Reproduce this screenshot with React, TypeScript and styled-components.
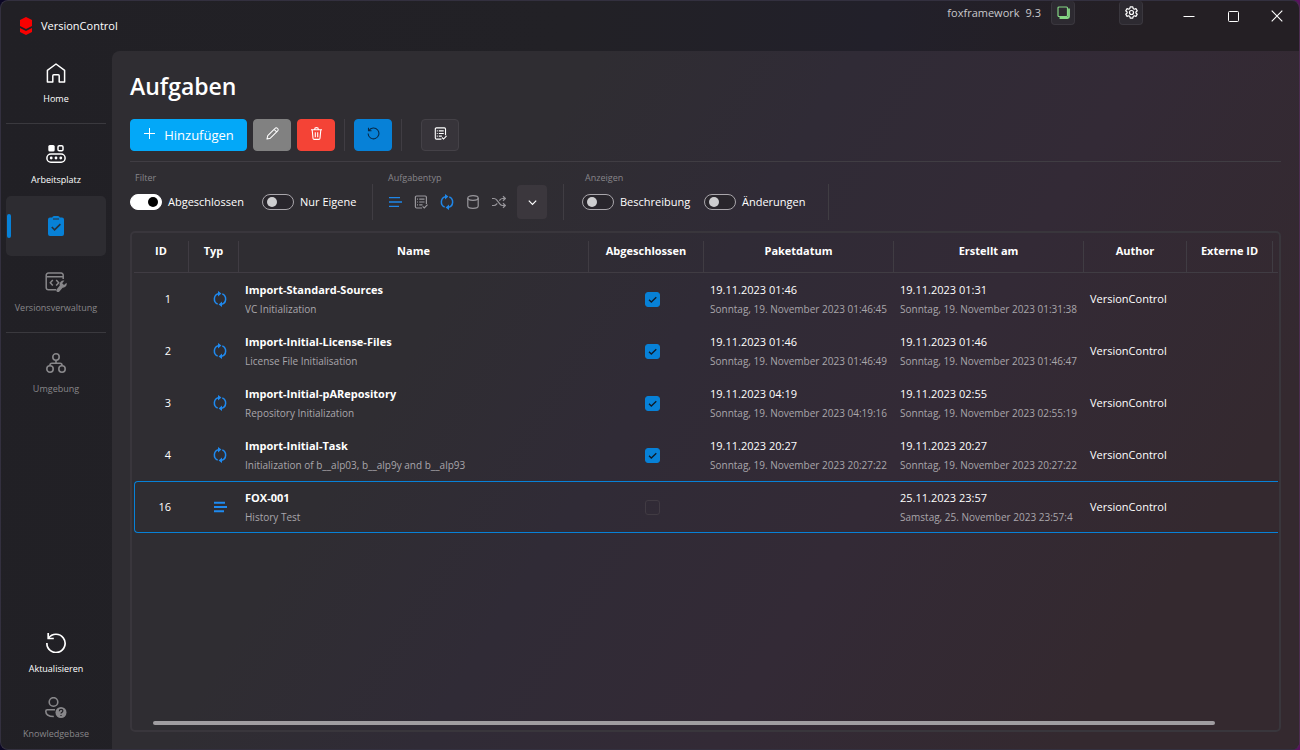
import React from "react";
import styled, { createGlobalStyle, css } from "styled-components";

const GlobalStyle = createGlobalStyle`
  *, *::before, *::after { box-sizing: border-box; }
  html, body, #root { height: 100%; }
  body {
    margin: 0;
    background: linear-gradient(90deg, #0b0724 0%, #2b0a35 60%, #5a1260 100%);
    color: #fff;
    font-family: "Open Sans", "Noto Sans", sans-serif;
    font-size: 11px;
    line-height: 16px;
  }
  button, input { font: inherit; color: inherit; margin: 0; }
`;

const Window = styled.div`
  height: 100%;
  min-height: 640px;
  display: grid;
  grid-template: 50px minmax(0, 1fr) / 111px minmax(0, 1fr);
  border: 1px solid #33303f;
  border-right-color: #4d2c50;
  border-radius: 8px;
  overflow: hidden;
  background: linear-gradient(100deg, #212025 0%, #222126 40%, #22202a 62%, #241f24 80%);
`;

const TitleBar = styled.header`
  grid-column: 1 / -1;
  display: flex;
  align-items: flex-start;
  justify-content: space-between;
`;

const Brand = styled.div`
  display: flex;
  align-items: center;
  gap: 8px;
  padding: 14px 0 0 18px;
  line-height: 22px;
`;

const TitleTools = styled.div`
  display: flex;
  align-items: flex-start;
`;

const Project = styled.span`
  display: flex;
  gap: 6px;
  padding-right: 10px;
  line-height: 24px;
  color: #c9c8cb;
`;

const TitleButton = styled.button<{ $gap: number }>`
  width: 24px;
  height: 24px;
  margin-right: ${(p) => p.$gap}px;
  padding: 0;
  display: grid;
  place-items: center;
  background: #2d2a31;
  border: 1px solid #3a373e;
  border-top: 0;
  border-radius: 4px;
`;

const CaptionButton = styled.button`
  width: 44px;
  height: 29px;
  padding: 0;
  display: grid;
  place-items: center;
  background: none;
  border: 0;
`;

const Sidebar = styled.nav`
  display: flex;
  flex-direction: column;
  gap: 4px;
  padding: 0 6px 4px 5px;
`;

const NavItem = styled.button<{ $tone?: "bright" | "dim"; $active?: boolean }>`
  height: 60px;
  padding: ${(p) => (p.$active ? "0" : "12px 0 0")};
  display: flex;
  flex-direction: column;
  align-items: center;
  justify-content: ${(p) => (p.$active ? "center" : "flex-start")};
  gap: 9px;
  border: 0;
  border-radius: 5px;
  background: none;
  color: ${(p) => (p.$tone === "dim" ? "#88878a" : "#fff")};
  font-size: 9px;
  line-height: 14px;
  white-space: nowrap;
  position: relative;
  ${(p) =>
    p.$active &&
    css`
      background: #2d2c31;
      color: #0781d7;
      &::before {
        content: "";
        position: absolute;
        left: 1px;
        top: 18px;
        width: 4px;
        height: 24px;
        border-radius: 2px;
        background: #0781d7;
      }
    `}
`;

const NavRule = styled.hr`
  width: 100%;
  height: 1px;
  margin: 8px 0 4px;
  border: 0;
  background: #3a393e;
`;

const Spacer = styled.div`
  flex: 1;
`;

const Main = styled.main`
  display: flex;
  flex-direction: column;
  padding: 19px 18px 17px 18px;
  border-top-left-radius: 8px;
  background: linear-gradient(122deg, #2f2d32 0%, #2f2d32 30%, #302b36 46%, #332a36 64%, #34292f 86%);
  min-width: 0;
`;

const PageTitle = styled.h1`
  margin: 0;
  font-size: 23px;
  line-height: 32px;
  font-weight: 600;
`;

const Toolbar = styled.div`
  display: flex;
  align-items: center;
  gap: 6px;
  margin-top: 17px;
  padding-bottom: 10px;
  border-bottom: 1px solid #403d43;
`;

const ToolButton = styled.button<{ $bg: string; $line?: string }>`
  width: 38px;
  height: 32px;
  padding: 0;
  display: grid;
  place-items: center;
  border: 1px solid ${(p) => p.$line || p.$bg};
  border-radius: 4px;
  background: ${(p) => p.$bg};
  svg { margin-bottom: 3px; }
`;

const AddButton = styled(ToolButton)`
  width: 117px;
  display: flex;
  align-items: center;
  justify-content: center;
  gap: 8px;
  font-size: 13px;
`;

const ToolRule = styled.span<{ $after: number }>`
  width: 1px;
  height: 32px;
  margin: 0 ${(p) => p.$after}px 0 3px;
  background: #403d43;
`;

const FilterBar = styled.div`
  display: flex;
  align-items: flex-end;
  height: 58px;
  margin-bottom: 11px;
`;

const Group = styled.fieldset<{ $width: number; $inset: number }>`
  width: ${(p) => p.$width}px;
  height: 51px;
  margin: 0;
  padding: 0 0 0 ${(p) => p.$inset}px;
  border: 0;
  border-right: 1px solid transparent;
  border-image: linear-gradient(transparent 15px, #403d43 15px) 1;
  border-image-width: 0 1px 0 0;
`;

const GroupName = styled.legend<{ $indent: number }>`
  float: left;
  width: 100%;
  padding: 2px 0 0 ${(p) => p.$indent}px;
  font-size: 9px;
  line-height: 14px;
  color: #87858a;
`;

const Controls = styled.div<{ $gap: number }>`
  clear: both;
  height: 34px;
  display: flex;
  align-items: center;
  gap: ${(p) => p.$gap}px;
`;

const Toggle = styled.label<{ $width: number }>`
  width: ${(p) => p.$width}px;
  display: flex;
  align-items: center;
  gap: 6px;
  white-space: nowrap;
`;

const Switch = styled.input`
  appearance: none;
  width: 32px;
  height: 16px;
  flex: none;
  padding: 2px;
  display: flex;
  align-items: center;
  border: 1px solid #a9a6ab;
  border-radius: 8px;
  background: #29262c;
  &::before {
    content: "";
    width: 10px;
    height: 10px;
    margin-left: 2px;
    border-radius: 50%;
    background: #ceced0;
  }
  &:checked { background: #fff; border-color: #fff; }
  &:checked::before { margin-left: 15px; background: #000; }
`;

const TypeButton = styled.button<{ $on?: boolean }>`
  width: 14px;
  height: 16px;
  padding: 0;
  display: grid;
  place-items: center;
  border: 0;
  background: none;
  color: ${(p) => (p.$on ? "#1f86e8" : "#98969b")};
`;

const MoreButton = styled.button`
  width: 30px;
  height: 34px;
  margin-left: -1px;
  padding: 0;
  display: grid;
  place-items: center;
  border: 0;
  border-radius: 4px;
  background: #3b373d;
`;

const Grid = styled.section`
  flex: 1;
  min-height: 0;
  display: flex;
  flex-direction: column;
  justify-content: space-between;
  padding: 0 1px 5px 2px;
  border: 2px solid #39363c;
  border-radius: 5px;
`;

const Table = styled.table`
  width: 100%;
  table-layout: fixed;
  border-collapse: separate;
  border-spacing: 0;
`;

const Th = styled.th<{ $last?: boolean }>`
  height: 40px;
  padding: 0;
  border-bottom: 1px solid #403c43;
  line-height: 16px;
  vertical-align: bottom;
  span {
    display: block;
    height: 31px;
    padding-top: 2px;
    white-space: nowrap;
    border-right: ${(p) => (p.$last ? "0" : "1px solid #403c43")};
  }
`;

const Td = styled.td`
  height: 52px;
  padding: 0 3px 0 6px;
  border: 0 solid #0781d7;
`;

const TextCell = styled(Td)`
  padding-top: 2px;
  overflow: hidden;
`;

const Row = styled.tr<{ $selected: boolean }>`
  ${(p) =>
    p.$selected &&
    css`
      ${Td} { border-width: 1px 0; }
      ${Td}:first-child { border-left-width: 1px; border-radius: 4px 0 0 4px; }
    `}
`;

const IdCell = styled(Td)`
  text-align: right;
  padding-right: 18px;
`;

const IconCell = styled(Td)`
  padding: 0 0 0 24px;
  color: #1f8af0;
  svg { display: block; }
`;

const CheckCell = styled(Td)`
  padding: 0 0 0 56px;
`;

const Check = styled.input`
  appearance: none;
  display: block;
  width: 15px;
  height: 15px;
  border: 1px solid #413b43;
  border-radius: 3px;
  &:checked {
    border-color: #0781d7;
    background: #0781d7
      url("data:image/svg+xml,%3Csvg xmlns='http://www.w3.org/2000/svg' width='13' height='13' fill='none' stroke='%23101a26' stroke-width='1.3'%3E%3Cpath d='M3 6.7l2.3 2.3L10.3 4.2'/%3E%3C/svg%3E")
      center no-repeat;
  }
`;

const Primary = styled.div<{ $bold?: boolean }>`
  line-height: 18px;
  font-weight: ${(p) => (p.$bold ? 700 : 400)};
  white-space: nowrap;
`;

const Secondary = styled.div`
  line-height: 20px;
  font-size: 10px;
  color: #a9a6ab;
  white-space: nowrap;
  overflow: hidden;
`;

const ScrollTrack = styled.div`
  padding: 0 63px 0 19px;
`;

const ScrollThumb = styled.div`
  height: 4px;
  border-radius: 2px;
  background: #a09da1;
`;

type IconProps = { size?: number; w?: number; children: React.ReactNode; box?: number };
const Icon = ({ size = 20, w = 1.5, box = 20, children }: IconProps) => (
  <svg width={size} height={size} viewBox={`0 0 ${box} ${box}`} fill="none" stroke="currentColor" strokeWidth={w} aria-hidden="true">
    {children}
  </svg>
);

const Logo = () => (
  <svg width="14" height="18" viewBox="0 0 14 18" aria-hidden="true">
    <path fill="#f80000" d="M7 0 13 3V9L7 12 1 9V3Z" />
    <path fill="#f80000" d="M1 11 7 14 13 11V15L7 18 1 15Z" />
  </svg>
);

const HomeIcon = () => (
  <Icon w={1.5}>
    <path strokeLinejoin="round" d="M1.400 19V7.400L10 1l8.600 6.400V19h-5.400v-6.200q0-1-1-1H7.800q-1 0-1 1V19Z" />
  </Icon>
);
const WorkspaceIcon = () => (
  <Icon>
    <rect x="2.300" y="1" width="6.400" height="6.400" rx="1.500" fill="currentColor" stroke="none" />
    <rect x="12" y="1.800" width="5" height="5" rx="1.300" />
    <rect x="0.900" y="10" width="18.200" height="8.200" rx="4" />
    <g fill="currentColor" stroke="none">
      <circle cx="5.200" cy="14" r="1.400" /><circle cx="10" cy="14" r="1.400" /><circle cx="14.800" cy="14" r="1.400" />
    </g>
  </Icon>
);
const TasksIcon = () => (
  <Icon>
    <path fill="currentColor" stroke="none" d="M4 1.600h2.200A2 2 0 0 1 8 0h4a2 2 0 0 1 1.800 1.600H16a2 2 0 0 1 2 2V18a2 2 0 0 1-2 2H4a2 2 0 0 1-2-2V3.600a2 2 0 0 1 2-2Z" />
    <path stroke="#2b2d34" strokeWidth="1" d="M7 3h6" />
    <path stroke="#25303c" strokeWidth="1.600" d="m5.800 11 2.800 2.900 5.800-5.800" />
  </Icon>
);
const VersionsIcon = () => (
  <svg width="22" height="20" viewBox="0 0 22 20" fill="none" stroke="currentColor" strokeWidth="1.500" aria-hidden="true">
    <path d="M18.200 7V3.500A2.300 2.300 0 0 0 16 1H3.500A2.300 2.300 0 0 0 1.200 3.500v12a2.300 2.300 0 0 0 2.300 2.300H11M1.200 4.700h17" />
    <path d="M7.800 8 5.300 10.800l2.500 2.800M11.200 8l2.500 2.800-2.500 2.800" />
    <path fill="currentColor" stroke="none" d="M19.400 8.600a3.800 3.800 0 0 0-4.600 4.800l-3 3.900a1.700 1.700 0 0 0 2.600 2.200l3.200-3.800a3.800 3.800 0 0 0 3.900-5l-2.500 2.200-1.800-1.600Z" />
  </svg>
);
const EnvironmentIcon = () => (
  <Icon w={1.600}>
    <circle cx="10" cy="4" r="3.200" /><circle cx="4" cy="16" r="3.200" /><circle cx="16" cy="16" r="3.200" />
    <path d="M10 7.200v3M4 12.800v-.8q0-1.800 2-1.800h8q2 0 2 1.800v.8" />
  </Icon>
);
const RefreshIcon = () => (
  <Icon w={1.700}>
    <path d="M2.500 5.200A9.100 9.100 0 1 1 .9 10" />
    <path d="M2.200 0v5.500h5.600" />
  </Icon>
);
const HelpUserIcon = () => (
  <svg width="22" height="21" viewBox="0 0 22 21" fill="none" stroke="currentColor" strokeWidth="1.600" aria-hidden="true">
    <circle cx="8.500" cy="5" r="4.300" />
    <path d="M10 12.800H2.300a1.500 1.500 0 0 0-1.500 1.500q0 5.200 8 5.200" />
    <circle cx="16" cy="15.500" r="5.500" fill="currentColor" stroke="none" />
    <path stroke="#222126" strokeWidth="1.200" d="M14.300 14.200q0-1.800 1.800-1.800t1.700 1.600q0 .8-1 1.400-.8.400-.8 1.200M16 17.900v1.200" />
  </svg>
);
const PencilIcon = () => (
  <Icon size={13} box={14} w={1.100}>
    <path strokeLinejoin="round" d="m1 13 .9-3.700L9.800 1.400a1.600 1.600 0 0 1 2.400 0l.4.400a1.600 1.600 0 0 1 0 2.400L4.700 12.100ZM8.700 2.500l2.800 2.800" />
  </Icon>
);
const TrashIcon = () => (
  <Icon size={13} box={13} w={1.100}>
    <path strokeLinejoin="round" d="M1 2.800h11M4.600 2.500q0-1.900 1.900-1.900t1.900 1.900M2.200 3l.8 8.300q.1 1.100 1.200 1.100h4.600q1.100 0 1.200-1.100L10.800 3M5.300 5.200v5M7.700 5.200v5" />
  </Icon>
);
const ReloadIcon = () => (
  <Icon size={13} box={13} w={1.100}>
    <path stroke="#082a48" d="M1.900 3.600A5.400 5.400 0 1 1 1.100 6.500M1.500 .8v3h3" />
  </Icon>
);
const ListCheckIcon = ({ size = 13 }: { size?: number }) => (
  <Icon size={size} box={14} w={1.200}>
    <path d="M12.400 9V2.200Q12.400 1 11.200 1H2.600Q1.400 1 1.400 2.200v9.600Q1.400 13 2.600 13H8M5.200 4.200h5.300M5.200 7h5.300M5.200 9.800h3.300M3 4.200h1M3 7h1M3 9.800h1M8.600 11.300l1.700 1.700 3.200-3.400" />
  </Icon>
);
const LinesIcon = ({ w = 1.300 }: { w?: number }) => (
  <Icon size={14} box={14} w={w}><path d="M1 2.700h11M1 7h13M1 11.300h10" /></Icon>
);
const SyncIcon = () => (
  <svg width="14" height="16" viewBox="0 0 14 16" fill="none" stroke="currentColor" strokeWidth="1.500" aria-hidden="true">
    <path d="M5.400 2.600A5.600 5.600 0 0 0 4.700 13.100M8.600 13.400A5.600 5.600 0 0 0 9.300 2.900" />
    <path fill="currentColor" stroke="none" d="M5 0 8.400 2.600 5 5.400ZM9 10.600 5.600 13.400 9 16Z" />
  </svg>
);
const DatabaseIcon = () => (
  <Icon size={14} box={14} w={1.200}>
    <ellipse cx="7" cy="3" rx="5.200" ry="2.300" />
    <path d="M1.800 3v8q0 2.300 5.200 2.300t5.200-2.300V3" />
  </Icon>
);
const ShuffleIcon = () => (
  <Icon size={14} box={14} w={1.200}>
    <path d="M0 3.500h2q1.500 0 2.600 1.300l3.400 4.400Q9 10.500 10.500 10.500H13M0 10.500h2q1.500 0 2.600-1.300l.6-.8M7.400 5.600l.6-.8Q9 3.500 10.500 3.500H13M11 1.300l2.300 2.200L11 5.700M11 8.300l2.300 2.200L11 12.700" />
  </Icon>
);

const nav = (label: string, icon: React.ReactNode, tone: "bright" | "dim" = "bright") => (
  <NavItem type="button" $tone={tone}>
    {icon}
    {label}
  </NavItem>
);

const columns: { label: string; width?: number }[] = [
  { label: "ID", width: 55 },
  { label: "Typ", width: 50 },
  { label: "Name" },
  { label: "Abgeschlossen", width: 115 },
  { label: "Paketdatum", width: 190 },
  { label: "Erstellt am", width: 190 },
  { label: "Author", width: 103 },
  { label: "Externe ID", width: 86 },
  { label: "", width: 5 },
];

type Task = {
  id: number;
  name: string;
  text: string;
  done: boolean;
  pack?: [string, string];
  created: [string, string];
};

const tasks: Task[] = [
  { id: 1, name: "Import-Standard-Sources", text: "VC Initialization", done: true, pack: ["19.11.2023 01:46", "Sonntag, 19. November 2023 01:46:45"], created: ["19.11.2023 01:31", "Sonntag, 19. November 2023 01:31:38"] },
  { id: 2, name: "Import-Initial-License-Files", text: "License File Initialisation", done: true, pack: ["19.11.2023 01:46", "Sonntag, 19. November 2023 01:46:49"], created: ["19.11.2023 01:46", "Sonntag, 19. November 2023 01:46:47"] },
  { id: 3, name: "Import-Initial-pARepository", text: "Repository Initialization", done: true, pack: ["19.11.2023 04:19", "Sonntag, 19. November 2023 04:19:16"], created: ["19.11.2023 02:55", "Sonntag, 19. November 2023 02:55:19"] },
  { id: 4, name: "Import-Initial-Task", text: "Initialization of b__alp03, b__alp9y and b__alp93", done: true, pack: ["19.11.2023 20:27", "Sonntag, 19. November 2023 20:27:22"], created: ["19.11.2023 20:27", "Sonntag, 19. November 2023 20:27:22"] },
  { id: 16, name: "FOX-001", text: "History Test", done: false, created: ["25.11.2023 23:57", "Samstag, 25. November 2023 23:57:4"] },
];

const DateCell = ({ value }: { value?: [string, string] }) => (
  <TextCell>
    {value && (
      <>
        <Primary>{value[0]}</Primary>
        <Secondary>{value[1]}</Secondary>
      </>
    )}
  </TextCell>
);

export default function App() {
  return (
    <>
      <GlobalStyle />
      <Window>
        <TitleBar>
          <Brand>
            <Logo />
            VersionControl
          </Brand>
          <TitleTools>
            <Project>
              <span>foxframework</span>
              <span>9.3</span>
            </Project>
            <TitleButton type="button" $gap={44} aria-label="Umgebung wechseln">
              <Icon size={13} box={13} w={1.200}>
                <g stroke="#84d684">
                  <rect x="1" y="1" width="9.500" height="9.500" rx="1" />
                  <path strokeWidth="1.800" d="M2.500 12H10.500Q12 12 12 10.500V2.500" />
                </g>
              </Icon>
            </TitleButton>
            <TitleButton type="button" $gap={24} aria-label="Einstellungen">
              <Icon size={13} box={24} w={2.200}>
                <path strokeLinejoin="round" d="M9.600 1.500h4.800l.7 3.300 1.900 1.100 3.200-1.100 2.400 4.200-2.500 2.200v1.600l2.500 2.200-2.400 4.200-3.200-1.100-1.900 1.100-.7 3.300H9.600l-.7-3.300L7 18.100l-3.200 1.100L1.400 15l2.500-2.200v-1.600L1.400 9l2.400-4.200L7 5.900l1.900-1.100Z" />
                <circle cx="12" cy="12" r="3.700" />
              </Icon>
            </TitleButton>
            <CaptionButton type="button" aria-label="Minimieren">
              <Icon size={12} box={12} w={1}><path d="M.5 6.500h11" /></Icon>
            </CaptionButton>
            <CaptionButton type="button" aria-label="Maximieren">
              <Icon size={12} box={12} w={1}><rect x="1.500" y="1.500" width="10" height="10" rx="1" /></Icon>
            </CaptionButton>
            <CaptionButton type="button" aria-label="Schließen">
              <Icon size={12} box={12} w={1.100}><path d="m.7.700 10.600 10.600M11.300.7.700 11.300" /></Icon>
            </CaptionButton>
          </TitleTools>
        </TitleBar>

        <Sidebar>
          {nav("Home", <HomeIcon />)}
          <NavRule />
          {nav("Arbeitsplatz", <WorkspaceIcon />)}
          <NavItem type="button" $active aria-label="Aufgaben">
            <TasksIcon />
          </NavItem>
          {nav("Versionsverwaltung", <VersionsIcon />, "dim")}
          <NavRule />
          {nav("Umgebung", <EnvironmentIcon />, "dim")}
          <Spacer />
          {nav("Aktualisieren", <RefreshIcon />)}
          {nav("Knowledgebase", <HelpUserIcon />, "dim")}
        </Sidebar>

        <Main>
          <PageTitle>Aufgaben</PageTitle>
          <Toolbar>
            <AddButton type="button" $bg="#03a8f8">
              <Icon size={13} box={13} w={1}><path d="M6.500 1v11M1 6.500h11" /></Icon>
              Hinzufügen
            </AddButton>
            <ToolButton type="button" $bg="#818181" aria-label="Bearbeiten"><PencilIcon /></ToolButton>
            <ToolButton type="button" $bg="#f44336" aria-label="Löschen"><TrashIcon /></ToolButton>
            <ToolRule $after={3} />
            <ToolButton type="button" $bg="#0781d7" aria-label="Neu laden"><ReloadIcon /></ToolButton>
            <ToolRule $after={13} />
            <ToolButton type="button" $bg="#37343a" $line="#444147" aria-label="Aufgabenliste"><ListCheckIcon /></ToolButton>
          </Toolbar>

          <FilterBar>
            <Group $width={243} $inset={0}>
              <GroupName $indent={5}>Filter</GroupName>
              <Controls $gap={0}>
                <Toggle $width={132}><Switch type="checkbox" defaultChecked />Abgeschlossen</Toggle>
                <Toggle $width={100}><Switch type="checkbox" />Nur Eigene</Toggle>
              </Controls>
            </Group>
            <Group $width={191} $inset={15}>
              <GroupName $indent={0}>Aufgabentyp</GroupName>
              <Controls $gap={12}>
                <TypeButton type="button" $on aria-label="Aufgabe"><LinesIcon /></TypeButton>
                <TypeButton type="button" aria-label="Prüfliste"><ListCheckIcon size={14} /></TypeButton>
                <TypeButton type="button" $on aria-label="Import"><SyncIcon /></TypeButton>
                <TypeButton type="button" aria-label="Datenbank"><DatabaseIcon /></TypeButton>
                <TypeButton type="button" aria-label="Gemischt"><ShuffleIcon /></TypeButton>
                <MoreButton type="button" aria-label="Weitere Typen">
                  <Icon size={9} box={9} w={1.200}><path d="m.8 2.600 3.700 3.700 3.700-3.700" /></Icon>
                </MoreButton>
              </Controls>
            </Group>
            <Group $width={265} $inset={18}>
              <GroupName $indent={3}>Anzeigen</GroupName>
              <Controls $gap={0}>
                <Toggle $width={122}><Switch type="checkbox" />Beschreibung</Toggle>
                <Toggle $width={110}><Switch type="checkbox" />Änderungen</Toggle>
              </Controls>
            </Group>
          </FilterBar>

          <Grid>
            <Table>
              <colgroup>
                {columns.map((c, i) => (
                  <col key={i} width={c.width} />
                ))}
              </colgroup>
              <thead>
                <tr>
                  {columns.map((c, i) => (
                    <Th key={i} scope="col" $last={i === columns.length - 1}>
                      <span>{c.label}</span>
                    </Th>
                  ))}
                </tr>
              </thead>
              <tbody>
                {tasks.map((t) => (
                  <Row key={t.id} $selected={t.id === 16}>
                    <IdCell>{t.id}</IdCell>
                    <IconCell>{t.done ? <SyncIcon /> : <LinesIcon w={2} />}</IconCell>
                    <TextCell>
                      <Primary $bold>{t.name}</Primary>
                      <Secondary>{t.text}</Secondary>
                    </TextCell>
                    <CheckCell>
                      <Check type="checkbox" defaultChecked={t.done} aria-label={`${t.name} abgeschlossen`} />
                    </CheckCell>
                    <DateCell value={t.pack} />
                    <DateCell value={t.created} />
                    <Td>VersionControl</Td>
                    <Td />
                    <Td />
                  </Row>
                ))}
              </tbody>
            </Table>
            <ScrollTrack>
              <ScrollThumb />
            </ScrollTrack>
          </Grid>
        </Main>
      </Window>
    </>
  );
}
